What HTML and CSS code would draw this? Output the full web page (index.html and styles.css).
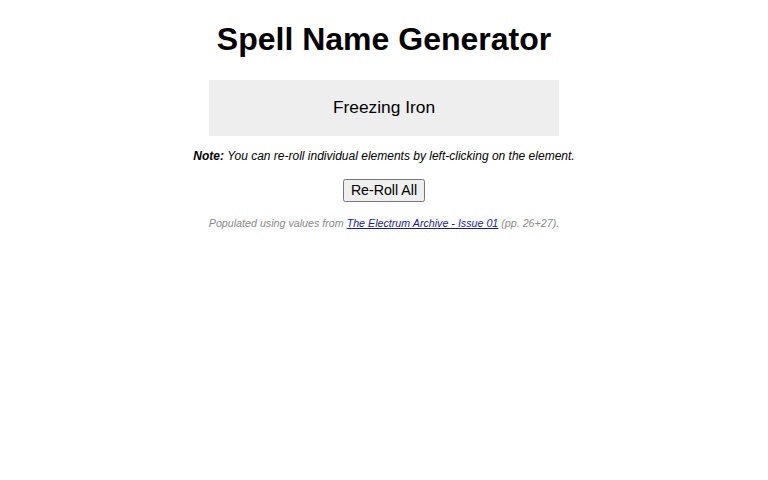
FILE: index.html
```html
<!DOCTYPE html>
<html lang="en">
<head>
<meta charset="utf-8">
<title>Spell Name Generator</title>
<link rel="stylesheet" href="styles.css">
</head>
<body>
<main class="page">
  <h1 class="title">Spell Name Generator</h1>
  <div class="result"><span class="part">Freezing</span> <span class="part">Iron</span></div>
  <p class="note"><b>Note:</b> You can re-roll individual elements by left-clicking on the element.</p>
  <button class="reroll" type="button">Re-Roll All</button>
  <p class="source">Populated using values from <a href="#">The Electrum Archive - Issue 01</a> (pp. 26+27).</p>
</main>
</body>
</html>
```

FILE: styles.css
```css
body {
  margin: 0;
  font-family: "Liberation Sans", Arial, sans-serif;
  color: #000;
  background: #fff;
}

.page {
  display: flex;
  flex-direction: column;
  align-items: center;
  padding-top: 21px;
}

.title {
  margin: 0;
  font-size: 32px;
  line-height: 37px;
  font-weight: bold;
}

.result {
  margin-top: 22px;
  width: 350px;
  box-sizing: border-box;
  padding: 17px 0;
  height: 55.5px;
  background: #eeeeee;
  text-align: center;
  font-size: 17.33px;
  line-height: 21px;
  cursor: pointer;
}

.note {
  margin: 13px 0 0;
  font-size: 12px;
  line-height: 14px;
  font-style: italic;
}

.reroll {
  margin-top: 16px;
  font-family: "Liberation Sans", Arial, sans-serif;
  font-size: 14.2px;
  line-height: 15px;
  padding: 2px 6px;
}

.source {
  margin: 15px 0 0;
  font-size: 10.7px;
  line-height: 13px;
  font-style: italic;
  color: #8a8a8a;
}

.source a {
  color: #1a1a9c;
}
```
